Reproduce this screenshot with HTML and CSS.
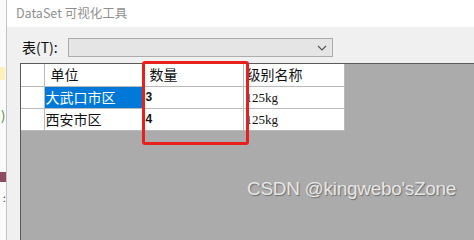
FILE: index.html
```html
<!DOCTYPE html>
<html>
<head>
<meta charset="utf-8">
<link rel="stylesheet" href="styles.css">
</head>
<body>
<div class="screen">
  <div class="strip">
    <div class="art art-yellow"></div>
    <div class="art art-paren">)</div>
    <div class="art art-maroon"></div>
    <div class="art art-dots">:</div>
  </div>
  <div class="window">
    <div class="titlebar">DataSet 可视化工具</div>
    <div class="body">
      <div class="toolbar">
        <span class="label">表(T):</span>
        <div class="combo">
          <svg class="chev" width="10" height="6" viewBox="0 0 10 6"><path d="M1 1 L5 5 L9 1" fill="none" stroke="#555" stroke-width="1.2"/></svg>
        </div>
      </div>
      <div class="grid">
        <table class="dgv">
          <tr class="hdr">
            <td class="rh"></td>
            <td class="c1">单位</td>
            <td class="c2">数量</td>
            <td class="c3">级别名称</td>
          </tr>
          <tr>
            <td class="rh"></td>
            <td class="c1 sel">大武口市区</td>
            <td class="c2 num">3</td>
            <td class="c3 kg">125kg</td>
          </tr>
          <tr>
            <td class="rh"></td>
            <td class="c1">西安市区</td>
            <td class="c2 num">4</td>
            <td class="c3 kg">125kg</td>
          </tr>
        </table>
      </div>
    </div>
  </div>
  <div class="redbox"></div>
  <div class="watermark">CSDN @kingwebo'sZone</div>
</div>
</body>
</html>
```

FILE: styles.css
```css
html, body {
  margin: 0;
  padding: 0;
  background: #ffffff;
  height: 100%;
}
.screen {
  position: relative;
  width: 100%;
  height: 100vh;
  min-height: 215px;
  overflow: hidden;
  display: flex;
  font-family: "Noto Sans CJK SC", "Noto Sans", sans-serif;
}
.strip {
  position: relative;
  width: 6px;
  flex: none;
  background: #fafafa;
  border-right: 1px solid #c4c4c4;
}
.art {
  position: absolute;
  left: 0;
}
.art-yellow {
  top: 67px;
  width: 5px;
  height: 13px;
  background: #fdf0b8;
}
.art-paren {
  top: 108px;
  left: 1px;
  font-size: 13px;
  color: #3b8a3b;
  line-height: 16px;
}
.art-maroon {
  top: 172px;
  width: 6px;
  height: 10px;
  background: #8e4a62;
}
.art-dots {
  top: 192px;
  left: 3px;
  font-size: 10px;
  color: #333;
  line-height: 12px;
}
.window {
  flex: 1;
  display: flex;
  flex-direction: column;
  min-width: 0;
}
.titlebar {
  height: 27px;
  flex: none;
  background: #ffffff;
  padding-left: 9px;
  font-size: 12.5px;
  line-height: 25px;
  color: #8f8f8f;
  box-sizing: border-box;
}
.body {
  flex: 1;
  background: #f0f0f0;
  display: flex;
  flex-direction: column;
  padding-left: 13px;
}
.toolbar {
  display: flex;
  align-items: center;
  height: 19px;
  margin-top: 11px;
  margin-bottom: 6px;
}
.label {
  margin-left: 2px;
  width: 46px;
  font-size: 14px;
  color: #111;
  line-height: 19px;
}
.combo {
  width: 265px;
  height: 19px;
  box-sizing: border-box;
  background: #e5e5e5;
  border: 1px solid #acacac;
  display: flex;
  align-items: center;
  justify-content: flex-end;
  padding-right: 5px;
}
.grid {
  flex: 1;
  background: #ababab;
  border-top: 1px solid #5a5a5a;
  border-left: 1px solid #5a5a5a;
}
.dgv {
  border-collapse: collapse;
  table-layout: fixed;
  background: #ffffff;
}
.dgv td {
  height: 22px;
  padding: 0;
  border-right: 1px solid #b9b9b9;
  border-bottom: 1px solid #b9b9b9;
  font-size: 14px;
  line-height: 21px;
  color: #111;
  white-space: nowrap;
  overflow: hidden;
  box-sizing: border-box;
}
.rh { width: 23px; }
.c1 { width: 99px; padding-left: 1px !important; }
.c2 { width: 100px; padding-left: 2px !important; }
.c3 { width: 101px; padding-left: 2px !important; }
.hdr .c1, .hdr .c2, .hdr .c3 {
  padding-left: 6px !important;
}
.hdr .c3 { padding-left: 3px !important; }
.sel {
  background: #0078d7;
  color: #ffffff !important;
}
.num {
  font-family: "Liberation Sans", sans-serif;
  font-weight: bold;
  font-size: 12px !important;
}
.kg {
  font-family: "Liberation Serif", serif;
  font-size: 13px !important;
}
.redbox {
  position: absolute;
  left: 142px;
  top: 61px;
  width: 101px;
  height: 78px;
  border: 3px solid #e8201c;
  border-radius: 3px;
}
.watermark {
  position: absolute;
  left: 247px;
  top: 178px;
  font-family: "Liberation Sans", sans-serif;
  font-size: 19px;
  letter-spacing: -0.3px;
  color: #e6e6e6;
  text-shadow: 1px 1px 1px #6e6e6e;
  white-space: nowrap;
}
```
